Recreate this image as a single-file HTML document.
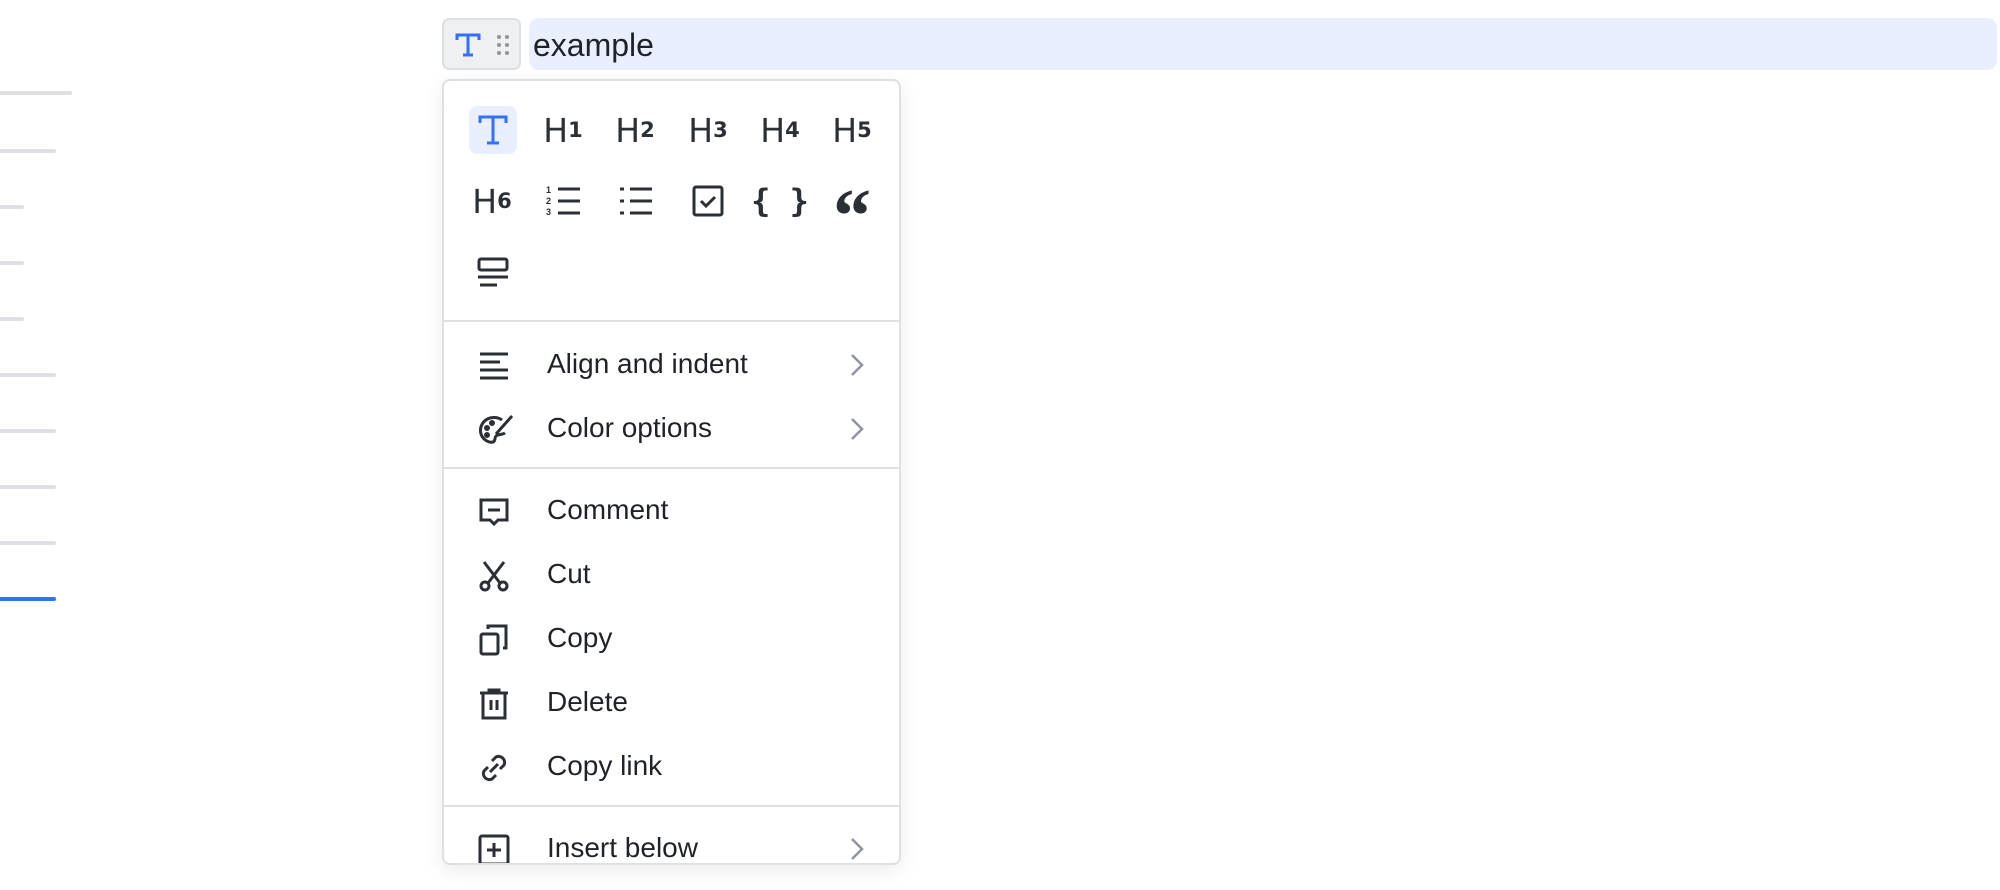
<!DOCTYPE html>
<html><head><meta charset="utf-8"><style>
*{margin:0;padding:0;box-sizing:border-box}
body{width:2000px;height:890px;background:#fff;position:relative;overflow:hidden;font-family:"Liberation Sans",sans-serif;color:#1f2329}
.ln{position:absolute;left:0;height:4px;background:#dee0e3;border-radius:0 2px 2px 0}
.btn{position:absolute;left:442px;top:18px;width:79px;height:52px;background:#eff0f1;border:2px solid #dee0e3;border-radius:7px}
.ex{position:absolute;left:529px;top:18px;width:1468px;height:52px;background:#e9effe;border-radius:10px;font-size:32px;line-height:54px;padding-left:4px;color:#1f2329}
.menu{position:absolute;left:442px;top:79px;width:459px;height:786px;border:2px solid #dee0e3;border-radius:8px;background:#fff;box-shadow:0 6px 20px rgba(0,0,0,.08);overflow:hidden}
.ic{position:absolute;width:60px;height:60px;display:flex;align-items:center;justify-content:center;font-size:33px;color:#2b2f36}
.hd{font-family:"DejaVu Sans",sans-serif}
.hd sub{font-size:21px;vertical-align:-2px;font-weight:bold}
.div{position:absolute;left:0;right:0;height:2px;background:#dee0e3}
.it{position:absolute;left:0;right:0;height:60px}
.it svg{position:absolute;left:34px;top:16px}
.it span{position:absolute;left:103px;top:0;line-height:60px;font-size:28px}
.it .ch{position:absolute;left:406px;top:19px}
</style></head><body>
<div class="ln" style="top:91px;width:72px"></div>
<div class="ln" style="top:149px;width:56px"></div>
<div class="ln" style="top:205px;width:24px"></div>
<div class="ln" style="top:261px;width:24px"></div>
<div class="ln" style="top:317px;width:24px"></div>
<div class="ln" style="top:373px;width:56px"></div>
<div class="ln" style="top:429px;width:56px"></div>
<div class="ln" style="top:485px;width:56px"></div>
<div class="ln" style="top:541px;width:56px"></div>
<div class="ln" style="top:597px;width:56px;background:#3370ff"></div>

<div class="btn">
<svg style="position:absolute;left:11px;top:12px" width="26" height="26" viewBox="0 0 26 26" fill="none" stroke="#3370ff" stroke-width="3"><path d="M2 8V3h22v5M13 3v20M8 23h10"/></svg>
<svg style="position:absolute;left:52px;top:14px" width="14" height="22" viewBox="0 0 14 22" fill="#8f959e"><circle cx="3" cy="3" r="2"/><circle cx="11" cy="3" r="2"/><circle cx="3" cy="11" r="2"/><circle cx="11" cy="11" r="2"/><circle cx="3" cy="19" r="2"/><circle cx="11" cy="19" r="2"/></svg>
</div>
<div class="ex">example</div>

<div class="menu">
<div style="position:absolute;left:25px;top:25px;width:48px;height:48px;background:#e9effe;border-radius:8px"></div>
<div class="ic" style="left:19px;top:19px"><svg width="32" height="32" viewBox="0 0 32 32" fill="none" stroke="#3370ff" stroke-width="3"><path d="M3 9V3h26v6M16 3v26M10 29h12"/></svg></div>
<div class="ic hd" style="left:89px;top:19px">H<sub>1</sub></div>
<div class="ic hd" style="left:161px;top:19px">H<sub>2</sub></div>
<div class="ic hd" style="left:234px;top:19px">H<sub>3</sub></div>
<div class="ic hd" style="left:306px;top:19px">H<sub>4</sub></div>
<div class="ic hd" style="left:378px;top:19px">H<sub>5</sub></div>
<div class="ic hd" style="left:18px;top:90px">H<sub>6</sub></div>
<div class="ic" style="left:89px;top:90px"><svg width="34" height="34" viewBox="0 0 34 34" fill="none" stroke="#2b2f36" stroke-width="3"><path d="M12 5h22M12 17h22M12 29h22"/><text x="0" y="9" font-size="9" font-weight="bold" fill="#2b2f36" stroke="none" font-family="Liberation Sans">1</text><text x="0" y="20" font-size="9" font-weight="bold" fill="#2b2f36" stroke="none" font-family="Liberation Sans">2</text><text x="0" y="31" font-size="9" font-weight="bold" fill="#2b2f36" stroke="none" font-family="Liberation Sans">3</text></svg></div>
<div class="ic" style="left:161px;top:90px"><svg width="34" height="34" viewBox="0 0 34 34" fill="none" stroke="#2b2f36" stroke-width="3"><path d="M12 5h22M12 17h22M12 29h22M2 5h4M2 17h4M2 29h4"/></svg></div>
<div class="ic" style="left:234px;top:90px"><svg width="32" height="32" viewBox="0 0 32 32" fill="none" stroke="#2b2f36" stroke-width="3"><rect x="2" y="2" width="28" height="28" rx="2"/><path d="M9 16l5 5 9-9"/></svg></div>
<div class="ic" style="left:306px;top:90px;font-family:'DejaVu Sans Mono',monospace;font-size:32px;font-weight:bold">{&#8201;}</div>
<div class="ic" style="left:378px;top:90px;font-size:76px;font-weight:bold;font-family:'Liberation Serif',serif;line-height:60px;padding-top:30px">&#8220;</div>
<div class="ic" style="left:19px;top:161px"><svg width="32" height="32" viewBox="0 0 32 32" fill="none" stroke="#2b2f36" stroke-width="3"><rect x="2" y="3" width="28" height="11" rx="2"/><path d="M1 21h30M3 29h17"/></svg></div>

<div class="div" style="top:239px"></div>
<div class="it" style="top:253px"><svg width="32" height="32" viewBox="0 0 32 32" stroke="#2b2f36" stroke-width="3"><path d="M2 4h28M2 12h20M2 20h28M2 28h28"/></svg><span>Align and indent</span><svg class="ch" width="14" height="24" viewBox="0 0 14 24" fill="none" stroke="#8f959e" stroke-width="2.5"><path d="M2 2l10 10-10 10"/></svg></div>
<div class="it" style="top:317px"><svg width="36" height="32" viewBox="0 0 36 32" fill="none" stroke="#2b2f36" stroke-width="3"><path d="M24 6C20 3 16 3 12 4 5 6 1 13 3 20c2 6 8 9 12 8 3-1 1-4 3-6 2-2 6-1 9-3M34 2L18 20"/><circle cx="9" cy="14" r="1.5" fill="#2b2f36"/><circle cx="14" cy="9" r="1.5" fill="#2b2f36"/><circle cx="9" cy="21" r="1.5" fill="#2b2f36"/></svg><span>Color options</span><svg class="ch" width="14" height="24" viewBox="0 0 14 24" fill="none" stroke="#8f959e" stroke-width="2.5"><path d="M2 2l10 10-10 10"/></svg></div>
<div class="div" style="top:386px"></div>
<div class="it" style="top:399px"><svg width="32" height="32" viewBox="0 0 32 32" fill="none" stroke="#2b2f36" stroke-width="3"><path d="M3 4h26v20H20l-4 4-4-4H3z"/><path d="M10 14h12"/></svg><span>Comment</span></div>
<div class="it" style="top:463px"><svg width="32" height="32" viewBox="0 0 32 32" fill="none" stroke="#2b2f36" stroke-width="3"><path d="M6 2l16 21M26 2L10 23"/><circle cx="7" cy="26" r="4"/><circle cx="25" cy="26" r="4"/></svg><span>Cut</span></div>
<div class="it" style="top:527px"><svg width="32" height="32" viewBox="0 0 32 32" fill="none" stroke="#2b2f36" stroke-width="3"><rect x="3" y="10" width="17" height="20" rx="2"/><path d="M10 5V2h18v22h-3"/></svg><span>Copy</span></div>
<div class="it" style="top:591px"><svg width="32" height="32" viewBox="0 0 32 32" fill="none" stroke="#2b2f36" stroke-width="3"><path d="M2 5h28M11 5V2h10v3M5 5v25h22V5M13 12v10M19 12v10"/></svg><span>Delete</span></div>
<div class="it" style="top:655px"><svg width="32" height="32" viewBox="0 0 32 32" fill="none" stroke="#2b2f36" stroke-width="3"><path d="M14 9l4-4a6 6 0 018 8l-4 4M18 23l-4 4a6 6 0 01-8-8l4-4M12 20l8-8"/></svg><span>Copy link</span></div>
<div class="div" style="top:724px"></div>
<div class="it" style="top:737px"><svg width="32" height="32" viewBox="0 0 32 32" fill="none" stroke="#2b2f36" stroke-width="3"><rect x="2" y="2" width="28" height="28" rx="2"/><path d="M16 9v14M9 16h14"/></svg><span>Insert below</span><svg class="ch" width="14" height="24" viewBox="0 0 14 24" fill="none" stroke="#8f959e" stroke-width="2.5"><path d="M2 2l10 10-10 10"/></svg></div>
</div>
</body></html>
